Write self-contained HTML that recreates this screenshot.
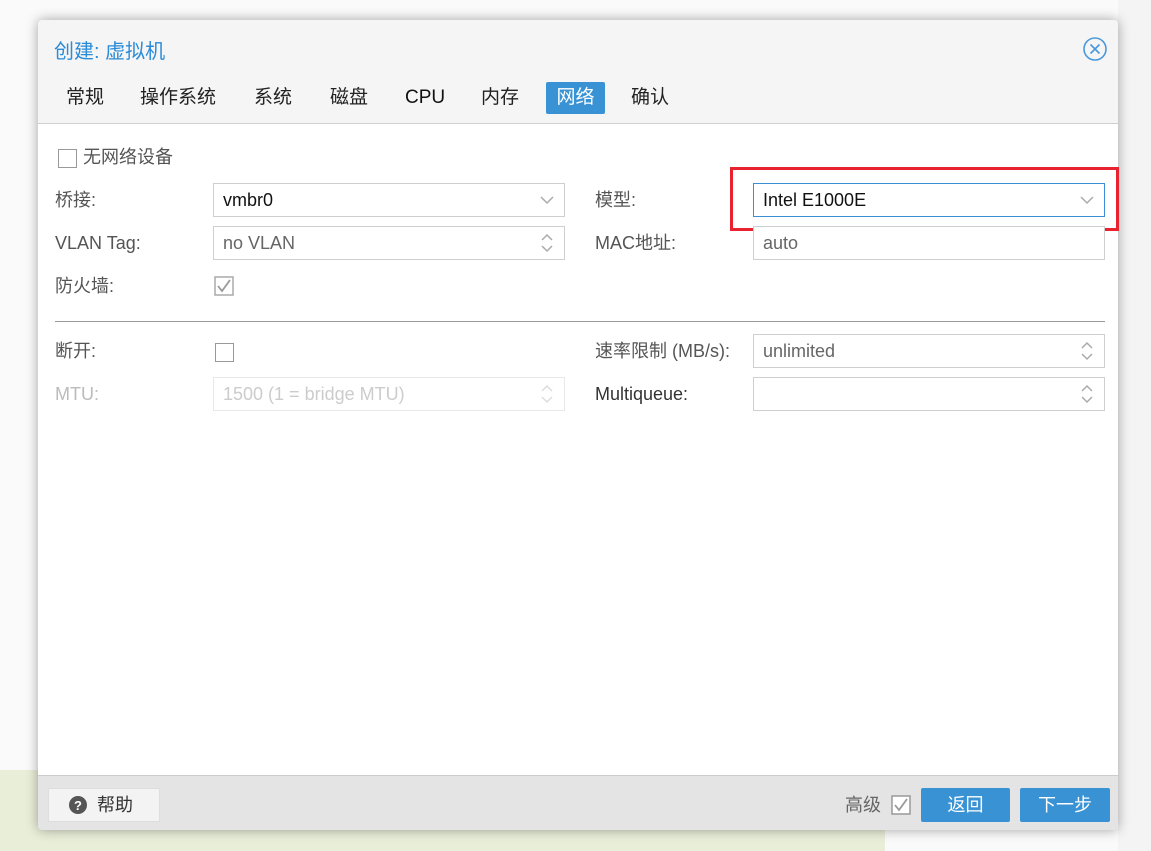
<!DOCTYPE html>
<html><head><meta charset="utf-8"><style>
*{box-sizing:border-box;margin:0;padding:0}
body{width:1151px;height:851px;position:relative;overflow:hidden;background:#fafafa;font-family:"Liberation Sans","Noto Sans CJK SC",sans-serif;font-size:18px;color:#333}
.abs{position:absolute}
.dlg{left:38px;top:20px;width:1080px;height:810px;background:#f5f5f5;border-radius:4px;box-shadow:0 0 12px rgba(0,0,0,.35)}
.lbl{position:absolute;color:#555;font-size:18px;line-height:34px}
.inp{position:absolute;height:34px;border:1px solid #cfcfcf;background:#fff;line-height:32px;padding-left:9px;color:#666}
.arr{position:absolute;right:10px;top:8px}
.cb{position:absolute;width:19px;height:19px;border:1.5px solid #999;background:#fff}
.btn{position:absolute;height:34px;background:#3892d4;color:#fff;text-align:center;line-height:34px;border-radius:2px}
</style></head><body>
<div class="abs" style="left:0;top:770px;width:885px;height:81px;background:#e9eed8"></div>
<div class="abs" style="left:1118px;top:0;width:33px;height:851px;background:#f4f4f4"></div>
<div class="abs dlg">
 <div class="abs" style="left:16px;top:15px;font-size:20px;color:#2a8bd8">创建: 虚拟机</div>
 <svg class="abs" style="left:1044px;top:16px" width="26" height="26" viewBox="0 0 26 26"><circle cx="13" cy="13" r="11" fill="none" stroke="#4a98dc" stroke-width="1.6"/><path d="M8.5 8.5L17.5 17.5M17.5 8.5L8.5 17.5" stroke="#4a98dc" stroke-width="1.6"/></svg>
 <div class="abs" style="left:28px;top:66px;color:#222;line-height:24px;font-size:19px">常规</div>
 <div class="abs" style="left:102px;top:66px;color:#222;line-height:24px;font-size:19px">操作系统</div>
 <div class="abs" style="left:216px;top:66px;color:#222;line-height:24px;font-size:19px">系统</div>
 <div class="abs" style="left:292px;top:66px;color:#222;line-height:24px;font-size:19px">磁盘</div>
 <div class="abs" style="left:367px;top:66px;color:#111;line-height:24px;font-size:19px">CPU</div>
 <div class="abs" style="left:443px;top:66px;color:#222;line-height:24px;font-size:19px">内存</div>
 <div class="abs" style="left:508px;top:62px;width:59px;height:32px;background:#3892d4;color:#fff;line-height:32px;text-align:center;border-radius:2px;font-size:19px">网络</div>
 <div class="abs" style="left:593px;top:66px;color:#222;line-height:24px;font-size:19px">确认</div>
 <div class="abs" style="left:0;top:103px;width:1080px;height:652px;background:#fff;border-top:1px solid #d0d0d0"></div>
 <div class="cb" style="left:20px;top:129px"></div>
 <div class="lbl" style="left:45px;top:120px">无网络设备</div>
 <div class="lbl" style="left:17px;top:163px">桥接:</div>
 <div class="inp" style="left:175px;top:163px;width:352px;color:#111">vmbr0<svg class="arr" width="14" height="16"><path d="M1 5l6 6 6-6" fill="none" stroke="#aaa" stroke-width="1.5"/></svg></div>
 <div class="lbl" style="left:17px;top:206px">VLAN Tag:</div>
 <div class="inp" style="left:175px;top:206px;width:352px">no VLAN<svg class="arr" style="top:5px" width="14" height="22"><path d="M2 8l5-5 5 5M2 14l5 5 5-5" fill="none" stroke="#aaa" stroke-width="1.5"/></svg></div>
 <div class="lbl" style="left:17px;top:249px">防火墙:</div>
 <svg class="abs" style="left:176px;top:256px" width="20" height="20"><rect x="1" y="1" width="18" height="18" fill="#fff" stroke="#aaa" stroke-width="1.5"/><path d="M4 10l4 5 8-11" fill="none" stroke="#999" stroke-width="1.8"/></svg>
 <div class="lbl" style="left:557px;top:163px">模型:</div>
 <div class="inp" style="left:715px;top:163px;width:352px;border-color:#3b8fd6;color:#111">Intel E1000E<svg class="arr" width="14" height="16"><path d="M1 5l6 6 6-6" fill="none" stroke="#aaa" stroke-width="1.5"/></svg></div>
 <div class="abs" style="left:692px;top:147px;width:389px;height:64px;border:3px solid #e8232f"></div>
 <div class="lbl" style="left:557px;top:206px">MAC地址:</div>
 <div class="inp" style="left:715px;top:206px;width:352px">auto</div>
 <div class="abs" style="left:17px;top:301px;width:1050px;height:1px;background:#999"></div>
 <div class="lbl" style="left:17px;top:314px">断开:</div>
 <div class="cb" style="left:177px;top:323px"></div>
 <div class="lbl" style="left:17px;top:357px;color:#bbb">MTU:</div>
 <div class="inp" style="left:175px;top:357px;width:352px;border-color:#e8e8e8;color:#ccc">1500 (1 = bridge MTU)<svg class="arr" style="top:5px" width="14" height="22"><path d="M2 8l5-5 5 5M2 14l5 5 5-5" fill="none" stroke="#ddd" stroke-width="1.5"/></svg></div>
 <div class="lbl" style="left:557px;top:314px">速率限制 (MB/s):</div>
 <div class="inp" style="left:715px;top:314px;width:352px">unlimited<svg class="arr" style="top:5px" width="14" height="22"><path d="M2 8l5-5 5 5M2 14l5 5 5-5" fill="none" stroke="#aaa" stroke-width="1.5"/></svg></div>
 <div class="lbl" style="left:557px;top:357px;color:#333">Multiqueue:</div>
 <div class="inp" style="left:715px;top:357px;width:352px"><svg class="arr" style="top:5px" width="14" height="22"><path d="M2 8l5-5 5 5M2 14l5 5 5-5" fill="none" stroke="#aaa" stroke-width="1.5"/></svg></div>
 <div class="abs" style="left:0;top:755px;width:1080px;height:55px;background:#e4e4e4;border-top:1px solid #ccc;border-radius:0 0 4px 4px"></div>
 <div class="abs" style="left:10px;top:768px;width:112px;height:34px;background:#f3f3f3;border:1px solid #ddd;border-radius:2px"></div>
 <svg class="abs" style="left:31px;top:776px" width="18" height="18"><circle cx="9" cy="9" r="9" fill="#555"/><text x="9" y="14" font-size="13" font-weight="bold" fill="#fff" text-anchor="middle" font-family="Liberation Sans">?</text></svg>
 <div class="abs" style="left:59px;top:773px;line-height:24px;color:#333">帮助</div>
 <div class="abs" style="left:807px;top:773px;line-height:24px;color:#666">高级</div>
 <svg class="abs" style="left:853px;top:775px" width="20" height="20"><rect x="1" y="1" width="18" height="18" fill="#fff" stroke="#999" stroke-width="1.5"/><path d="M4 10l4 5 8-11" fill="none" stroke="#999" stroke-width="1.8"/></svg>
 <div class="btn" style="left:883px;top:768px;width:89px">返回</div>
 <div class="btn" style="left:982px;top:768px;width:90px">下一步</div>
</div>
</body></html>
